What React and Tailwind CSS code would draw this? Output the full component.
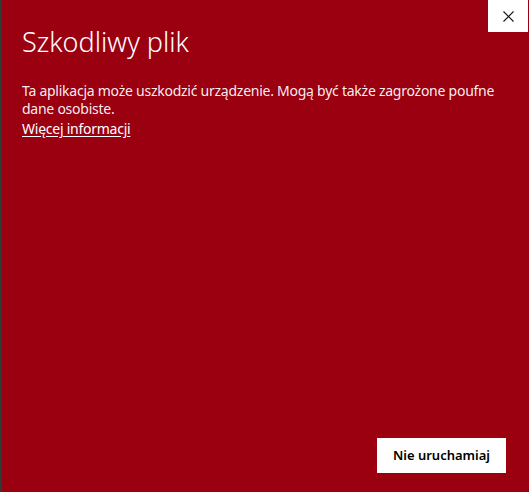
export default function App() {
  return (
    <div
      className="w-[529px] h-[492px] flex bg-[#9b0011] text-white overflow-hidden"
      style={{ fontFamily: '"Noto Sans", "Open Sans", sans-serif' }}
    >
      <div className="w-[2px] bg-[#2e3a36] shrink-0" />
      <div className="flex-1 flex flex-col">
        <div className="flex justify-end pr-px">
          <button className="w-[40px] h-[32px] bg-white flex items-center justify-center">
            <svg width="11" height="11" viewBox="0 0 11 11" stroke="#111" strokeWidth="1.1">
              <path d="M0.5 0.5 L10.5 10.5 M10.5 0.5 L0.5 10.5" />
            </svg>
          </button>
        </div>
        <div className="pl-[20px] pr-[14px] flex flex-col">
          <h1 className="text-[27px] font-light leading-[32px] mt-[-6px]">Szkodliwy plik</h1>
          <p className="mt-[24px] text-[14px] leading-[18px] tracking-[-0.25px] text-white/95">
            Ta aplikacja może uszkodzić urządzenie. Mogą być także zagrożone poufne dane osobiste.
          </p>
          <a href="#" className="text-[14px] leading-[21px] tracking-[-0.25px] underline underline-offset-2 self-start">
            Więcej informacji
          </a>
        </div>
        <div className="mt-auto mb-[19px] flex justify-end pr-[23px]">
          <button className="w-[129px] h-[35px] bg-white text-black text-[13px] font-semibold">
            Nie uruchamiaj
          </button>
        </div>
      </div>
    </div>
  );
}
